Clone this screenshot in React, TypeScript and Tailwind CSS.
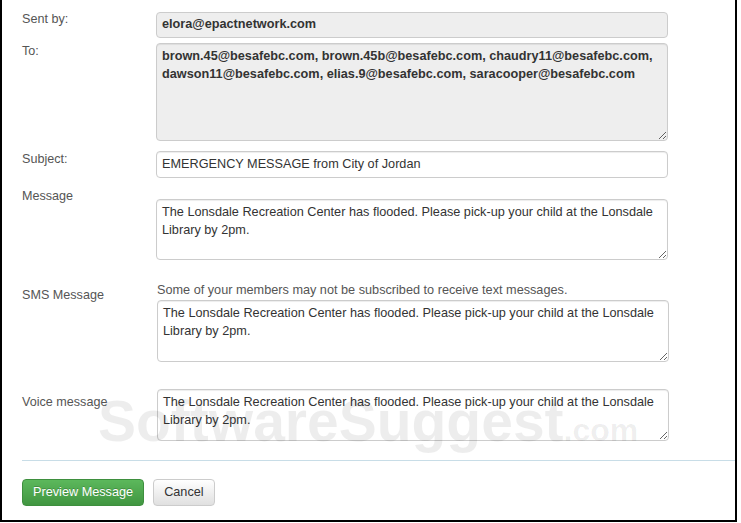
import React from "react";

const font = "font-['Liberation_Sans',Arial,sans-serif]";

const messageText =
  "The Lonsdale Recreation Center has flooded. Please pick-up your child at the Lonsdale\nLibrary by 2pm.";

const recipients =
  "brown.45@besafebc.com, brown.45b@besafebc.com, chaudry11@besafebc.com,\ndawson11@besafebc.com, elias.9@besafebc.com, saracooper@besafebc.com";

function Label({ children, className = "" }: { children: React.ReactNode; className?: string }) {
  return (
    <div className={`w-[134px] shrink-0 text-[12.6px] leading-[18px] text-[#555] ${className}`}>
      {children}
    </div>
  );
}

function Area({ value, className = "" }: { value: string; className?: string }) {
  return (
    <textarea
      readOnly
      defaultValue={value}
      className={`block w-[512px] rounded-[4px] border border-[#ccc] px-[5px] py-[3px] text-[12.7px] leading-[18px] text-[#333] shadow-[inset_0_1px_1px_rgba(0,0,0,0.075)] outline-none ${font} ${className}`}
    />
  );
}

export default function App() {
  return (
    <div className={`relative h-[522px] w-[737px] overflow-hidden border-x-2 border-b-2 border-black bg-white ${font}`}>
      <div className="pl-[20px] pt-[12px]">
        {/* Sent by */}
        <div className="flex">
          <Label className="-mt-[2px]">Sent by:</Label>
          <div className="flex h-[26px] w-[512px] items-center rounded-[4px] border border-[#ccc] bg-[#eee] px-[5px] text-[12.7px] font-bold text-[#333]">
            elora@epactnetwork.com
          </div>
        </div>

        {/* To */}
        <div className="mt-[5px] flex">
          <Label className="-mt-[1px]">To:</Label>
          <Area value={recipients} className="h-[98px] bg-[#eee] font-bold" />
        </div>

        {/* Subject */}
        <div className="mt-[10px] flex">
          <Label className="-mt-[1px]">Subject:</Label>
          <div className="flex h-[27px] w-[512px] items-center rounded-[4px] border border-[#ccc] bg-white px-[5px] text-[12.7px] text-[#333] shadow-[inset_0_1px_1px_rgba(0,0,0,0.075)]">
            EMERGENCY MESSAGE from City of Jordan
          </div>
        </div>

        {/* Message */}
        <div className="mt-[9px] flex">
          <Label>Message</Label>
          <Area value={messageText} className="mt-[12px] h-[61px] bg-white" />
        </div>

        {/* SMS */}
        <div className="mt-[21px] flex">
          <Label className="pt-[5px]">SMS Message</Label>
          <div className="pl-[1px]">
            <div className="text-[12.7px] leading-[18px] text-[#555]">
              Some of your members may not be subscribed to receive text messages.
            </div>
            <Area value={messageText} className="mt-[1px] h-[62px] bg-white" />
          </div>
        </div>

        {/* Voice */}
        <div className="mt-[27px] flex">
          <Label className="pt-[4px]">Voice message</Label>
          <div className="pl-[1px]">
            <Area value={messageText} className="h-[52px] bg-white" />
          </div>
        </div>
      </div>

      <div className="ml-[20px] mt-[19px] h-px bg-[#c8dde7]" />

      <div className="flex gap-[9px] pl-[20px] pt-[18px]">
        <button className="h-[27px] rounded-[4px] border border-[#3e8f3e] bg-gradient-to-b from-[#5cb85c] to-[#419641] px-[10px] text-[12.7px] text-white [text-shadow:0_-1px_0_rgba(0,0,0,0.2)]">
          Preview Message
        </button>
        <button className="h-[27px] rounded-[4px] border border-[#ccc] bg-gradient-to-b from-white to-[#e0e0e0] px-[10px] text-[12.7px] text-[#333]">
          Cancel
        </button>
      </div>

      {/* watermark */}
      <div className="pointer-events-none absolute left-[96px] top-[393px] flex items-baseline font-bold leading-none text-black/[0.07]">
        <span className="text-[57px]">SoftwareSuggest</span>
        <span className="text-[32px]">.com</span>
      </div>
    </div>
  );
}
